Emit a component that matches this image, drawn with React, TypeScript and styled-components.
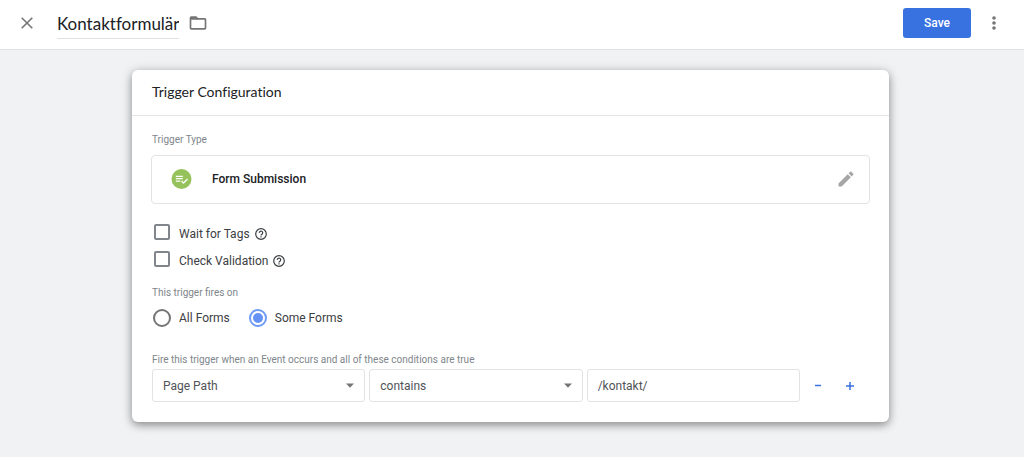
import React, { useState } from "react";
import styled, { createGlobalStyle } from "styled-components";

const GlobalStyle = createGlobalStyle`
  *, *::before, *::after { box-sizing: border-box; }
  html { min-height: 100%; background: #f1f2f4; }
  body {
    margin: 0;
    font-family: Roboto, "Liberation Sans", sans-serif;
    font-size: 12px;
    line-height: 16px;
    color: #3c4043;
  }
  button, input, select { font: inherit; color: inherit; }
`;

const TopBar = styled.header`
  display: flex;
  align-items: center;
  height: 50px;
  padding: 0 20px 4px 17px;
  background: #fff;
  border-bottom: 1px solid #dfe1e5;
`;

const IconButton = styled.button<{ $size?: number }>`
  display: flex;
  align-items: center;
  justify-content: center;
  flex: none;
  width: ${(p) => p.$size ?? 20}px;
  height: ${(p) => p.$size ?? 20}px;
  padding: 0;
  border: 0;
  background: none;
  color: #757575;
  cursor: pointer;
`;

const NameInput = styled.input`
  width: 122px;
  height: 32px;
  margin: 0 9px 0 20px;
  padding: 2px 0 0;
  border: 0;
  border-bottom: 1px solid #dfe1e5;
  background: none;
  font-family: Lato, sans-serif;
  font-size: 17px;
  font-variant-ligatures: none;
  color: #202124;
  outline: none;
`;

const SaveButton = styled.button`
  width: 68px;
  height: 30px;
  margin: 0 13px 0 auto;
  padding: 0;
  border: 0;
  border-radius: 3px;
  background: #3871e0;
  color: #fff;
  font-weight: 500;
  cursor: pointer;
`;

const Page = styled.main`
  padding: 20px 135px 35px 132px;
`;

const Card = styled.section`
  background: #fff;
  border-radius: 6px;
  box-shadow: 0 3px 8px rgba(0, 0, 0, 0.38), 0 1px 14px rgba(0, 0, 0, 0.1);
`;

const CardTitle = styled.h2`
  margin: 0;
  padding: 12px 20px 13px;
  border-bottom: 1px solid #e4e5e7;
  font-family: Lato, sans-serif;
  font-size: 14px;
  line-height: 20px;
  font-weight: 400;
  font-variant-ligatures: none;
  color: #202124;
`;

const CardBody = styled.div`
  padding: 16px 20px 20px;
`;

const Caption = styled.div`
  font-size: 10px;
  color: #80868b;
`;

const TypeBox = styled.div`
  display: flex;
  align-items: center;
  height: 49px;
  margin: 7px -1px 16px;
  padding: 0 13px 1px 19px;
  border: 1px solid #e2e3e5;
  border-radius: 4px;
`;

const TypeName = styled.span`
  flex: 1;
  margin-left: 20px;
  font-weight: 500;
  color: #202124;
`;

const OptionRow = styled.div`
  display: flex;
  align-items: center;
  gap: 5px;
  height: 27px;
`;

const OptionLabel = styled.label`
  display: flex;
  align-items: center;
  gap: 9px;
`;

const Checkbox = styled.input`
  appearance: none;
  width: 16px;
  height: 16px;
  margin: 0 0 4px 2px;
  border: 2px solid #80868b;
  border-radius: 2px;
  &:checked { background: #80868b; }
`;

const FieldGroup = styled.fieldset`
  margin: 0;
  padding: 0;
  border: 0;
`;

const Legend = styled.legend`
  padding: 0;
  font-size: 10px;
  color: #80868b;
`;

const FiresOn = styled(FieldGroup)`
  margin: 11px 0 25px;
`;

const RadioRow = styled.div`
  display: flex;
  gap: 19px;
  padding: 8px 0 0 1px;
`;

const RadioLabel = styled.label`
  display: flex;
  align-items: center;
  gap: 8px;
`;

const Radio = styled.input`
  appearance: none;
  display: grid;
  place-items: center;
  width: 18px;
  height: 18px;
  margin: 0;
  border: 2px solid #757575;
  border-radius: 50%;
  &:checked { border-color: #6e9bf7; }
  &:checked::before {
    content: "";
    width: 10px;
    height: 10px;
    border-radius: 50%;
    background: #6593f5;
  }
`;

const Conditions = styled.div`
  display: grid;
  grid-template-columns: repeat(3, minmax(0, 1fr)) 28px 28px;
  align-items: center;
  gap: 4px;
  padding: 1px 5px 0 0;
`;

const SelectWrap = styled.div`
  position: relative;
  color: #757575;
`;

const Arrow = styled.svg`
  position: absolute;
  right: 10px;
  top: 14px;
  pointer-events: none;
`;

const fieldBox = `
  display: block;
  width: 100%;
  height: 33px;
  padding: 0 10px;
  border: 1px solid #e2e3e5;
  border-radius: 3px;
  background: #fff;
  color: #505357;
`;

const Select = styled.select`
  ${fieldBox}
  appearance: none;
`;

const TextField = styled.input`
  ${fieldBox}
`;

const StepButton = styled(IconButton)`
  color: #3871e0;
`;

const Help = ({ topic }: { topic: string }) => (
  <IconButton type="button" $size={12} aria-label={`Help: ${topic}`}>
    <svg width="12" height="12" viewBox="0 0 12 12" fill="none" stroke="#3c4043" strokeWidth="1.2">
      <circle cx="6" cy="6" r="5.3" />
      <path d="M4.3 4.9a1.7 1.7 0 1 1 2.7 1.3C6.3 6.7 6 6.900 6 7.500" />
      <path d="M6 8.200v1.200" />
    </svg>
  </IconButton>
);

const CheckOption = ({ label }: { label: string }) => (
  <OptionRow>
    <OptionLabel>
      <Checkbox type="checkbox" />
      {label}
    </OptionLabel>
    <Help topic={label} />
  </OptionRow>
);

const Dropdown = ({ label, options }: { label: string; options: string[] }) => (
  <SelectWrap>
    <Select aria-label={label}>
      {options.map((o) => (
        <option key={o}>{o}</option>
      ))}
    </Select>
    <Arrow width="10" height="5" viewBox="0 0 10 5">
      <path d="M1 0.500h8L5 4.700z" fill="currentColor" />
    </Arrow>
  </SelectWrap>
);

export default function App() {
  const [name, setName] = useState("Kontaktformulär");
  const [scope, setScope] = useState("Some Forms");
  const [value, setValue] = useState("/kontakt/");

  return (
    <>
      <GlobalStyle />
      <TopBar>
        <IconButton type="button" aria-label="Close">
          <svg width="12" height="12" viewBox="0 0 12 12" stroke="currentColor" strokeWidth="1.600">
            <path d="M0.700 0.700l10.600 10.600M11.300 0.700L0.700 11.300" />
          </svg>
        </IconButton>
        <NameInput aria-label="Trigger name" value={name} onChange={(e) => setName(e.target.value)} />
        <IconButton type="button" aria-label="Move to folder">
          <svg width="20" height="20" viewBox="0 0 24 24" fill="currentColor">
            <path d="M9.170 6l2 2H20v10H4V6h5.170M10 4H4c-1.100 0-1.990.9-1.990 2L2 18c0 1.100.9 2 2 2h16c1.100 0 2-.9 2-2V8c0-1.100-.9-2-2-2h-8l-2-2z" />
            <path d="M3 5h7l2 3H3z" />
          </svg>
        </IconButton>
        <SaveButton type="button">Save</SaveButton>
        <IconButton type="button" aria-label="More actions">
          <svg width="4" height="14" viewBox="0 0 4 14" fill="currentColor">
            <circle cx="2" cy="2" r="1.800" />
            <circle cx="2" cy="7" r="1.800" />
            <circle cx="2" cy="12" r="1.800" />
          </svg>
        </IconButton>
      </TopBar>
      <Page>
        <Card>
          <CardTitle>Trigger Configuration</CardTitle>
          <CardBody>
            <Caption>Trigger Type</Caption>
            <TypeBox>
              <svg width="21" height="20" viewBox="0 0 20 20">
                <circle cx="10" cy="10" r="10" fill="#95c25b" />
                <path
                  d="M4.300 7.300h7M4.300 9.700h7M4.300 12.100h4.500M10 12l2 2 4-4"
                  fill="none"
                  stroke="#fff"
                  strokeWidth="1.300"
                />
              </svg>
              <TypeName>Form Submission</TypeName>
              <IconButton type="button" aria-label="Edit trigger type">
                <svg width="20" height="20" viewBox="0 0 24 24" fill="#a6a6a6">
                  <path d="M3 17.250V21h3.750L17.810 9.940l-3.750-3.750L3 17.250zM20.710 7.040c.39-.39.39-1.020 0-1.410l-2.340-2.340c-.39-.39-1.020-.39-1.410 0l-1.830 1.830 3.750 3.750 1.830-1.830z" />
                </svg>
              </IconButton>
            </TypeBox>
            <CheckOption label="Wait for Tags" />
            <CheckOption label="Check Validation" />
            <FiresOn>
              <Legend>This trigger fires on</Legend>
              <RadioRow>
                {["All Forms", "Some Forms"].map((option) => (
                  <RadioLabel key={option}>
                    <Radio
                      type="radio"
                      name="scope"
                      checked={scope === option}
                      onChange={() => setScope(option)}
                    />
                    {option}
                  </RadioLabel>
                ))}
              </RadioRow>
            </FiresOn>
            <FieldGroup>
              <Legend>Fire this trigger when an Event occurs and all of these conditions are true</Legend>
              <Conditions>
                <Dropdown label="Variable" options={["Page Path", "Page URL", "Form ID"]} />
                <Dropdown label="Operator" options={["contains", "equals", "starts with"]} />
                <TextField aria-label="Value" value={value} onChange={(e) => setValue(e.target.value)} />
                <StepButton type="button" $size={28} aria-label="Remove condition">
                  <svg width="8" height="8" viewBox="0 0 8 8" stroke="currentColor" strokeWidth="1.500">
                    <path d="M1 3.500h6" />
                  </svg>
                </StepButton>
                <StepButton type="button" $size={28} aria-label="Add condition">
                  <svg width="8" height="8" viewBox="0 0 8 8" stroke="currentColor" strokeWidth="1.500">
                    <path d="M0 4h8M4 0v8" />
                  </svg>
                </StepButton>
              </Conditions>
            </FieldGroup>
          </CardBody>
        </Card>
      </Page>
    </>
  );
}
